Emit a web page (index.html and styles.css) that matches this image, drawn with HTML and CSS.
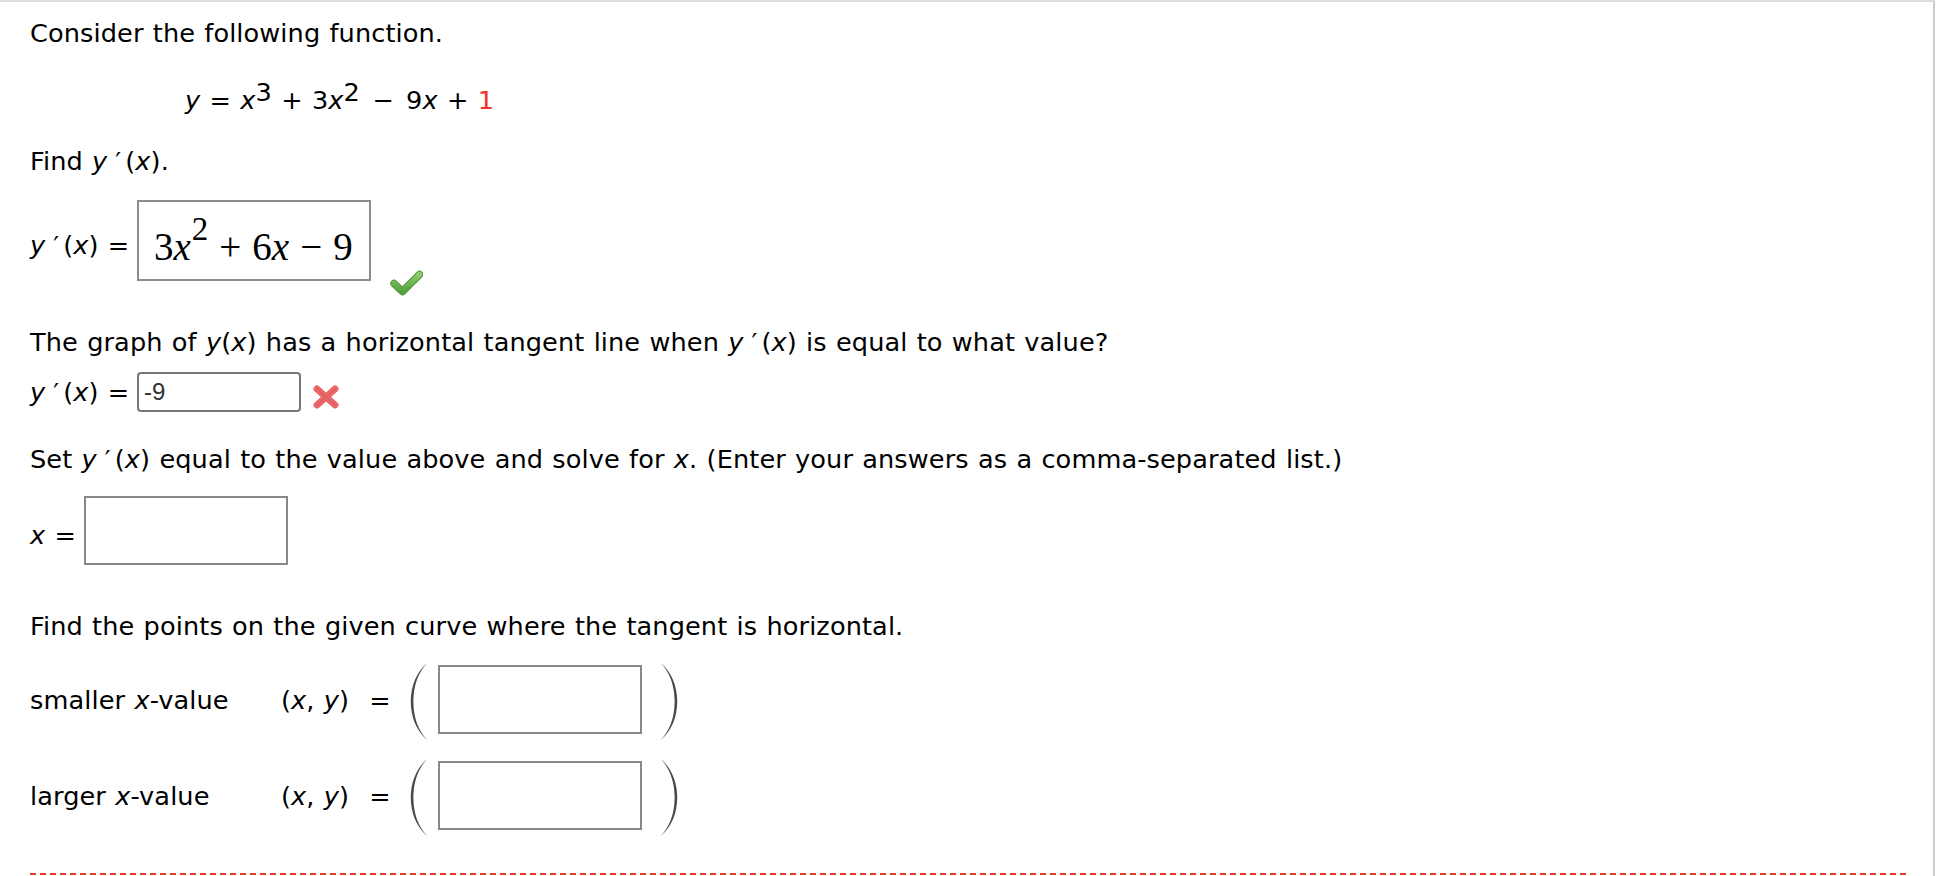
FILE: index.html
```html
<!DOCTYPE html>
<html>
<head>
<meta charset="utf-8">
<link rel="stylesheet" href="styles.css">
</head>
<body>
<div class="page">
  <p class="line intro">Consider the following function.</p>
  <p class="line eq"><i>y</i> = <i>x</i><sup>3</sup> + 3<i>x</i><sup>2</sup> <span class="op">−</span> 9<i>x</i> + <span class="red">1</span></p>
  <p class="line find">Find <i>y</i><span class="prime">′</span>(<i>x</i>).</p>

  <div class="row deriv">
    <span class="lbl line"><i>y</i><span class="prime">′</span>(<i>x</i>) =</span>
    <div class="mathbox"><span class="mn">3</span><span class="mi">x</span><sup class="msup">2</sup><span class="mo">+</span><span class="mn">6</span><span class="mi">x</span><span class="mo">−</span><span class="mn">9</span></div>
    <svg class="check" width="33" height="26" viewBox="0 0 33 26">
      <defs>
        <linearGradient id="cg" x1="0" y1="0" x2="0" y2="1">
          <stop offset="0" stop-color="#8ccb6c"/>
          <stop offset="1" stop-color="#55a13e"/>
        </linearGradient>
      </defs>
      <path d="M4 13.5 L12.5 21.5 L29.5 4.5" fill="none" stroke="#4e9638" stroke-width="7.5" stroke-linecap="round" stroke-linejoin="round"/>
      <path d="M4 13.5 L12.5 21.5 L29.5 4.5" fill="none" stroke="url(#cg)" stroke-width="5.5" stroke-linecap="round" stroke-linejoin="round"/>
    </svg>
  </div>

  <p class="line graph">The graph of <i>y</i>(<i>x</i>) has a horizontal tangent line when <i>y</i><span class="prime">′</span>(<i>x</i>) is equal to what value?</p>

  <div class="row ans1">
    <span class="lbl line"><i>y</i><span class="prime">′</span>(<i>x</i>) =</span>
    <input class="field" type="text" value="-9">
    <svg class="xmark" width="28" height="26" viewBox="0 0 28 26">
      <path d="M5 5 L23 21 M23 5 L5 21" fill="none" stroke="#e9696b" stroke-width="7" stroke-linecap="round"/>
      <path d="M5 5 L23 21 M23 5 L5 21" fill="none" stroke="#e24d53" stroke-width="2" stroke-linecap="round" opacity="0.35"/>
    </svg>
  </div>

  <p class="line set">Set <i>y</i><span class="prime">′</span>(<i>x</i>) equal to the value above and solve for <i>x</i>. (Enter your answers as a comma-separated list.)</p>

  <div class="row xrow">
    <span class="xlbl line"><i>x</i> =</span>
    <div class="bigbox"></div>
  </div>

  <p class="line pts-title">Find the points on the given curve where the tangent is horizontal.</p>

  <div class="pts">
    <div class="pt">
      <span class="plabel line">smaller <i>x</i>-value</span>
      <span class="xy line">(<i>x</i>, <i>y</i>)</span>
      <span class="peq line">=</span>
      <svg class="paren" width="19" height="79" viewBox="0 0 19 79"><path d="M18 0.5 C-5 18 -5 61 18 78.5 C-1.5 61 -1.5 18 18 0.5 Z" fill="#4a4a4a"/></svg>
      <div class="ptbox"></div>
      <svg class="paren rp" width="19" height="79" viewBox="0 0 19 79"><path d="M1 0.5 C24 18 24 61 1 78.5 C20.5 61 20.5 18 1 0.5 Z" fill="#4a4a4a"/></svg>
    </div>
    <div class="pt">
      <span class="plabel line">larger <i>x</i>-value</span>
      <span class="xy line">(<i>x</i>, <i>y</i>)</span>
      <span class="peq line">=</span>
      <svg class="paren" width="19" height="79" viewBox="0 0 19 79"><path d="M18 0.5 C-5 18 -5 61 18 78.5 C-1.5 61 -1.5 18 18 0.5 Z" fill="#4a4a4a"/></svg>
      <div class="ptbox"></div>
      <svg class="paren rp" width="19" height="79" viewBox="0 0 19 79"><path d="M1 0.5 C24 18 24 61 1 78.5 C20.5 61 20.5 18 1 0.5 Z" fill="#4a4a4a"/></svg>
    </div>
  </div>

  <div class="dash"></div>
</div>
</body>
</html>
```
FILE: styles.css
```css
html, body {
  margin: 0;
  padding: 0;
  background: #fff;
  overflow: hidden;
}

body {
  font-family: "DejaVu Sans", Verdana, sans-serif;
  font-size: 25.6px;
  color: #000;
}

.page {
  box-sizing: border-box;
  width: 1935px;
  height: 876px;
  border-top: 2px solid #dcdcdc;
  border-right: 2px solid #cccccc;
  padding: 15px 24px 0 30px;
  word-spacing: 1px;
  letter-spacing: 0.1px;
}

p { margin: 0; }

.line {
  line-height: 32px;
}

i { font-style: italic; }

.prime {
  margin-left: 8px;
  margin-right: 4px;
}

sup {
  font-size: 1em;
  line-height: 0;
  vertical-align: 8px;
}

.eq {
  margin-top: 35px;
  margin-left: 155px;
}
.eq .op { margin: 0 3px; }
.red { color: #ee3124; }

.find { margin-top: 29px; }

.row {
  display: flex;
}

.deriv {
  margin-top: 23px;
  align-items: flex-start;
}
.deriv .lbl {
  flex: 0 0 107px;
  margin-top: 29px;
}

.mathbox {
  box-sizing: border-box;
  width: 234px;
  height: 81px;
  border: 2px solid #8c8c8c;
  padding: 23px 0 0 15px;
  font-family: "Liberation Serif", "Times New Roman", serif;
  font-size: 39px;
  line-height: 43px;
  white-space: nowrap;
  letter-spacing: 0;
  word-spacing: 0;
}
.mathbox .mi { font-style: italic; }
.mathbox .msup {
  font-size: 33px;
  vertical-align: 20px;
  margin-left: 1px;
}
.mathbox .mo { margin: 0 11px; }

.check {
  margin-left: 19px;
  margin-top: 70px;
}

.graph { margin-top: 30px; }

.ans1 {
  margin-top: 14px;
  align-items: center;
}
.ans1 .lbl { flex: 0 0 107px; }

.field {
  box-sizing: border-box;
  width: 164px;
  height: 40px;
  margin: 0;
  border: 2px solid #777;
  border-radius: 4px;
  padding: 0 5px;
  font-family: "Liberation Sans", Arial, sans-serif;
  font-size: 24px;
  color: #333;
  background: #fff;
  outline: none;
}

.xmark {
  margin-left: 11px;
  margin-top: 9px;
}

.set { margin-top: 31px; }

.xrow {
  margin-top: 21px;
  align-items: center;
}
.xlbl {
  flex: 0 0 54px;
  margin-top: 8px;
}
.bigbox {
  box-sizing: border-box;
  width: 204px;
  height: 69px;
  border: 2px solid #888;
}

.pts-title { margin-top: 45px; }

.pts {
  margin-top: 20px;
  display: flex;
  flex-direction: column;
  gap: 17px;
}

.pt {
  display: flex;
  align-items: flex-start;
}
.plabel {
  flex: 0 0 251px;
  margin-top: 22px;
}
.xy {
  margin-top: 22px;
}
.peq {
  margin-top: 22px;
  margin-left: 20px;
}
.paren {
  margin-left: 19px;
}
.ptbox {
  box-sizing: border-box;
  width: 204px;
  height: 69px;
  margin: 3px 0 0 9px;
  border: 2px solid #888;
}
.paren.rp {
  margin-left: 17px;
}

.dash {
  margin-top: 36px;
  height: 2px;
  background: repeating-linear-gradient(to right, #ea3a2d 0 6px, transparent 6px 10px);
}
```
